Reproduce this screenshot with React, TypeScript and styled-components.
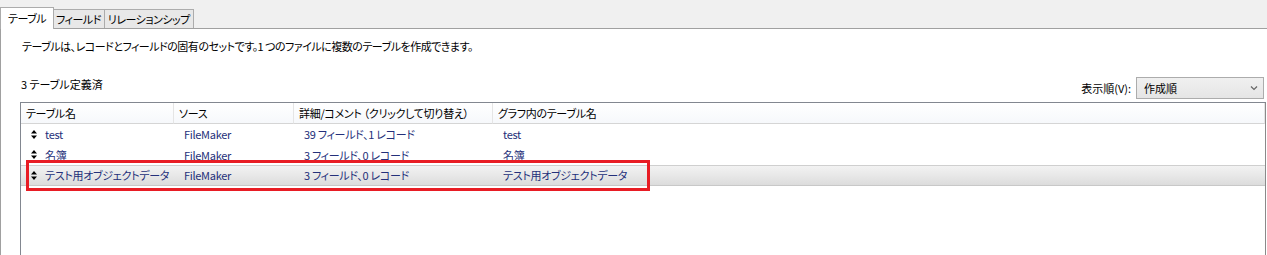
import styled, { createGlobalStyle } from "styled-components";

const GlobalStyle = createGlobalStyle`
  html, body {
    margin: 0;
    padding: 0;
    background: #f0f0f0;
    font-family: "Noto Sans CJK JP", "Noto Sans", sans-serif;
    font-size: 11px;
    font-feature-settings: "palt" 1;
    color: #000;
  }
`;

const Window = styled.div`
  width: 1267px;
  height: 255px;
  overflow: hidden;
  display: flex;
  flex-direction: column;
`;

const TabStrip = styled.div`
  flex-shrink: 0;
  display: flex;
  align-items: flex-end;
  height: 28px;
`;

const Tab = styled.div<{ $active?: boolean }>`
  box-sizing: border-box;
  display: flex;
  align-items: center;
  justify-content: center;
  white-space: nowrap;
  letter-spacing: -0.5px;
  border: 1px solid #acacac;
  border-bottom: none;
  background: ${(p) => (p.$active ? "#ffffff" : "#e8e8e8")};
  height: ${(p) => (p.$active ? "22px" : "19px")};
  margin-bottom: ${(p) => (p.$active ? "-1px" : "0")};
  padding: ${(p) => (p.$active ? "0 7px 1px" : "0 3px")};
  margin-left: -1px;
  position: relative;
  z-index: ${(p) => (p.$active ? 2 : 1)};
  &:first-child {
    margin-left: 0;
  }
  &:nth-child(2) {
    margin-left: -2px;
  }
`;

const Panel = styled.div`
  flex: 1;
  min-height: 0;
  background: #ffffff;
  border-top: 1px solid #a0a0a0;
  border-left: 1px solid #a0a0a0;
  padding: 9px 1px 0 19px;
  display: flex;
  flex-direction: column;
`;

const Description = styled.div`
  line-height: 16px;
  padding-left: 2px;
  letter-spacing: -0.5px;
`;

const SummaryRow = styled.div`
  display: flex;
  justify-content: space-between;
  align-items: flex-end;
  margin-top: 22px;
  padding-right: 2px;
`;

const Count = styled.div`
  line-height: 16px;
  padding-left: 1px;
  margin-bottom: 7px;
`;

const SortControl = styled.div`
  display: flex;
  align-items: center;
  gap: 5px;
`;

const Select = styled.div`
  box-sizing: border-box;
  width: 128px;
  height: 22px;
  border: 1px solid #acacac;
  background: linear-gradient(#f0f0f0, #e5e5e5);
  display: flex;
  align-items: center;
  justify-content: space-between;
  padding: 0 5px 0 7px;
`;

const ListBox = styled.div`
  position: relative;
  flex: 1;
  margin-top: 3px;
  border: 1px solid #828790;
  border-bottom: none;
  border-right-color: #8a8a8a;
  background: #ffffff;
`;

const Grid = styled.div`
  display: grid;
  grid-template-columns: 153px 120px 199px 1fr;
`;

const HeaderCell = styled.div`
  height: 20px;
  display: flex;
  align-items: center;
  padding-left: 5px;
  white-space: nowrap;
  letter-spacing: -0.3px;
  background: linear-gradient(#ffffff, #f6f8fb);
  border-bottom: 1px solid #d5d5d5;
  border-right: 1px solid #e5e5e5;
  &:last-child {
    border-right: none;
  }
`;

const Row = styled.div<{ $selected?: boolean }>`
  display: contents;
  color: #24307a;
  & > div {
    box-sizing: border-box;
    height: 20.5px;
    display: flex;
    align-items: center;
    white-space: nowrap;
    letter-spacing: -0.3px;
    padding-left: 10px;
    gap: 8px;
    ${(p) =>
      p.$selected &&
      `
      background: linear-gradient(#f2f2f2, #e9e9e9 45%, #dcdcdc);
      border-top: 1px solid #cfcfcf;
      border-bottom: 1px solid #c8c8c8;
    `}
  }
`;

const Cell = styled.div``;

const Highlight = styled.div`
  position: absolute;
  left: 5px;
  top: 57px;
  width: 624px;
  height: 31px;
  box-sizing: border-box;
  border: 3px solid #e81c24;
  pointer-events: none;
`;

const MoveHandle = () => (
  <svg width="6" height="9" viewBox="0 0 6 9">
    <path d="M3 0 L6 3.5 L0 3.5 Z M0 5.5 L6 5.5 L3 9 Z" fill="#000" />
  </svg>
);

const Chevron = () => (
  <svg width="8" height="6" viewBox="0 0 8 6">
    <path d="M1 1.5 L4 4.5 L7 1.5" stroke="#666" strokeWidth="1.2" fill="none" />
  </svg>
);

const tables = [
  { name: "test", source: "FileMaker", detail: "39 フィールド、1 レコード", graph: "test" },
  { name: "名簿", source: "FileMaker", detail: "3 フィールド、0 レコード", graph: "名簿" },
  {
    name: "テスト用オブジェクトデータ",
    source: "FileMaker",
    detail: "3 フィールド、0 レコード",
    graph: "テスト用オブジェクトデータ",
  },
];

export default function App() {
  return (
    <Window>
      <GlobalStyle />
      <TabStrip>
        <Tab $active>テーブル</Tab>
        <Tab>フィールド</Tab>
        <Tab>リレーションシップ</Tab>
      </TabStrip>
      <Panel>
        <Description>
          テーブルは、レコードとフィールドの固有のセットです。1 つのファイルに複数のテーブルを作成できます。
        </Description>
        <SummaryRow>
          <Count>3 テーブル定義済</Count>
          <SortControl>
            <span>表示順(V):</span>
            <Select>
              <span>作成順</span>
              <Chevron />
            </Select>
          </SortControl>
        </SummaryRow>
        <ListBox>
          <Grid>
            <HeaderCell>テーブル名</HeaderCell>
            <HeaderCell>ソース</HeaderCell>
            <HeaderCell>詳細/コメント （クリックして切り替え）</HeaderCell>
            <HeaderCell>グラフ内のテーブル名</HeaderCell>
            {tables.map((t, i) => (
              <Row key={t.name} $selected={i === 2}>
                <Cell>
                  <MoveHandle />
                  {t.name}
                </Cell>
                <Cell>{t.source}</Cell>
                <Cell>{t.detail}</Cell>
                <Cell>{t.graph}</Cell>
              </Row>
            ))}
          </Grid>
          <Highlight />
        </ListBox>
      </Panel>
    </Window>
  );
}
